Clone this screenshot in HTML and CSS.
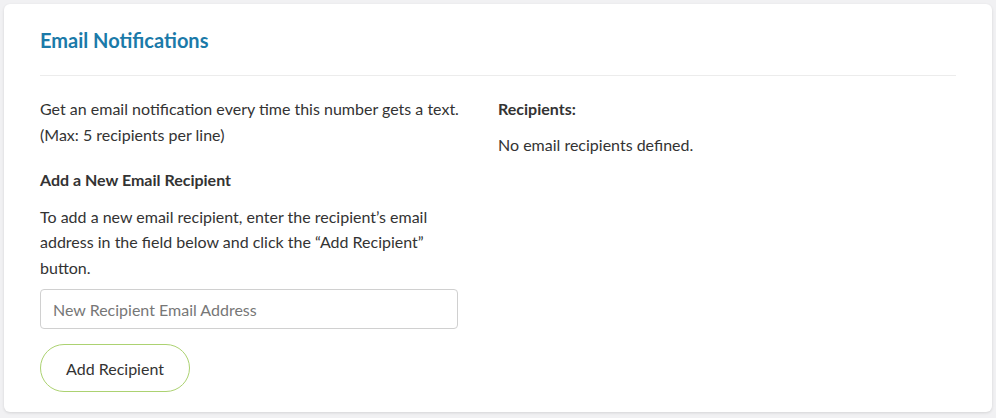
FILE: index.html
```html
<!DOCTYPE html>
<html lang="en">
<head>
<meta charset="utf-8">
<title>Email Notifications</title>
<link rel="stylesheet" href="styles.css">
</head>
<body>
<section class="card">
  <h2 class="card-title">Email Notifications</h2>
  <div class="columns">
    <div class="col-left">
      <p class="intro">Get an email notification every time this number gets a text. (Max: 5 recipients per line)</p>
      <h3 class="sub">Add a New Email Recipient</h3>
      <p class="help">To add a new email recipient, enter the recipient’s email address in the field below and click the “Add Recipient” button.</p>
      <input class="email-input" type="text" placeholder="New Recipient Email Address">
      <button class="btn" type="button">Add Recipient</button>
    </div>
    <div class="col-right">
      <h3 class="sub sub-right">Recipients:</h3>
      <p class="none">No email recipients defined.</p>
    </div>
  </div>
</section>
</body>
</html>
```
FILE: styles.css
```css
html, body {
  margin: 0;
  padding: 0;
}
body {
  background: #f1f1f3;
  padding: 4px;
  font-family: Lato, "Open Sans", sans-serif;
  color: #333;
  width: 988px;
}
.card {
  background: #fff;
  border-radius: 6px;
  box-shadow: 0 1px 3px rgba(0,0,0,0.12);
  height: 408px;
  box-sizing: border-box;
  padding: 24px 36px 0 36px;
}
.card-title {
  margin: 0;
  font-size: 20px;
  line-height: 24px;
  font-weight: 700;
  color: #1b7aa9;
  padding-bottom: 23px;
  border-bottom: 1px solid #ececec;
}
.columns {
  display: grid;
  grid-template-columns: 424px 1fr;
  column-gap: 34px;
  padding-top: 20px;
}
.col-left, .col-right {
  display: flex;
  flex-direction: column;
  align-items: flex-start;
}
p, h3 {
  margin: 0;
  font-size: 16px;
  line-height: 25.5px;
}
.sub {
  font-weight: 700;
  margin-top: 20px;
}
.sub-right {
  margin-top: 0;
}
.help {
  margin-top: 11px;
}
.none {
  margin-top: 10px;
}
.email-input {
  margin-top: 9px;
  width: 418px;
  height: 40px;
  box-sizing: border-box;
  border: 1px solid #d0d0d0;
  border-radius: 4px;
  padding: 0 12px;
  font-family: Lato, "Open Sans", sans-serif;
  font-size: 16px;
  color: #333;
  outline: none;
}
.email-input::placeholder {
  color: #777;
}
.btn {
  margin-top: 15px;
  height: 48px;
  width: 150px;
  border: 1px solid #acd271;
  border-radius: 24px;
  background: #fff;
  font-family: Lato, "Open Sans", sans-serif;
  font-size: 16px;
  color: #333;
  padding: 0;
  cursor: pointer;
}
```
